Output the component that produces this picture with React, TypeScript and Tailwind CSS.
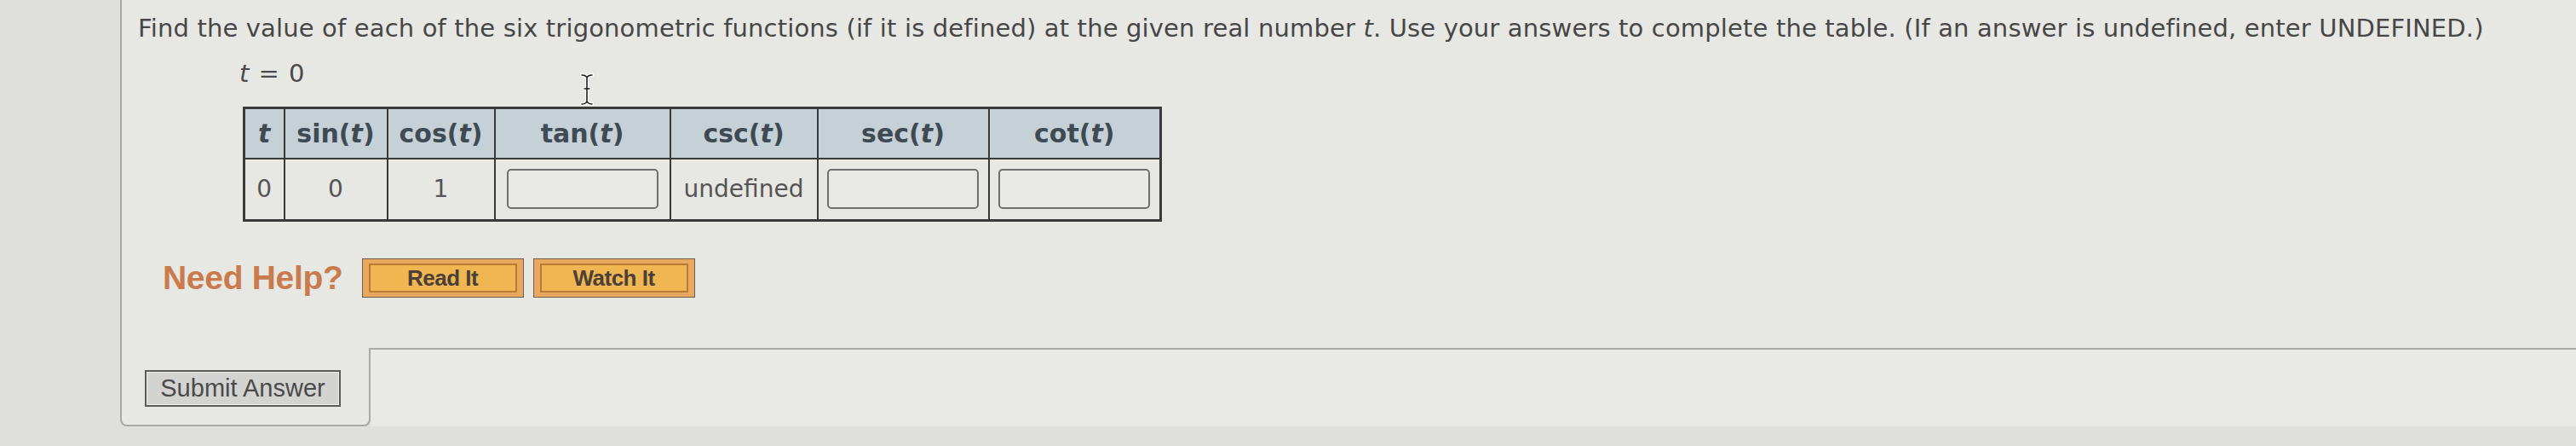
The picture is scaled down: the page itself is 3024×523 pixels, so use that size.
import React from 'react';

const cols = [
  { key: 't', w: 47 },
  { key: 'sin', w: 121 },
  { key: 'cos', w: 126 },
  { key: 'tan', w: 206 },
  { key: 'csc', w: 173 },
  { key: 'sec', w: 201 },
  { key: 'cot', w: 202 },
];

const Fn = ({ name }: { name: string }) => (
  <span>
    {name}(<i>t</i>)
  </span>
);

const AnswerBox = () => (
  <input
    type="text"
    className="block w-[178px] h-[47px] mx-auto rounded-[5px] border-2 border-[#6f6f6f] bg-[#e9e9e6] outline-none"
  />
);

const HelpButton = ({ label }: { label: string }) => (
  <button className="w-[190px] h-[46px] border border-[#6d5c4f] bg-[#e8a95f] px-[7px] py-[5px]">
    <div className="h-full flex items-center justify-center border-2 border-[#bb7a37] bg-[#efb651] font-['Liberation_Sans',Arial,sans-serif] font-bold text-[26px] tracking-[-0.5px] text-[#4b4038]">
      {label}
    </div>
  </button>
);

export default function App() {
  return (
    <div className="relative w-[3024px] h-[523px] overflow-hidden bg-[#dfdfdb] font-['DejaVu_Sans',Verdana,sans-serif]">
      <div className="ml-[141px] flex flex-col">
        {/* question panel */}
        <div className="relative border-l-2 border-[#a9a9a6] bg-[#e7e7e3] pl-[19px] pt-[14px] pb-[59px]">
          <p className="text-[29px] leading-[38px] tracking-[0.15px] text-[#474747] whitespace-nowrap">
            Find the value of each of the six trigonometric functions (if it is defined) at the given real number{' '}
            <i>t</i>. Use your answers to complete the table. (If an answer is undefined, enter UNDEFINED.)
          </p>

          <div className="ml-[119px] mt-[15px] text-[29px] leading-[38px] text-[#4a4a4a] [word-spacing:2px]">
            <i>t</i> = 0
          </div>

          <table className="ml-[123px] mt-[20px] table-fixed border-collapse border-[3px] border-[#3a3a3a] w-[1076px]">
            <colgroup>
              {cols.map((c) => (
                <col key={c.key} style={{ width: c.w }} />
              ))}
            </colgroup>
            <thead>
              <tr className="h-[59px] bg-[#c6d0d7] text-[30px] font-bold text-[#3e4a54]">
                <th className="border-2 border-[#3a3a3a]">
                  <i>t</i>
                </th>
                <th className="border-2 border-[#3a3a3a]"><Fn name="sin" /></th>
                <th className="border-2 border-[#3a3a3a]"><Fn name="cos" /></th>
                <th className="border-2 border-[#3a3a3a]"><Fn name="tan" /></th>
                <th className="border-2 border-[#3a3a3a]"><Fn name="csc" /></th>
                <th className="border-2 border-[#3a3a3a]"><Fn name="sec" /></th>
                <th className="border-2 border-[#3a3a3a]"><Fn name="cot" /></th>
              </tr>
            </thead>
            <tbody>
              <tr className="h-[73px] text-[28px] text-[#555555] text-center">
                <td className="border-2 border-[#3a3a3a]">0</td>
                <td className="border-2 border-[#3a3a3a]">0</td>
                <td className="border-2 border-[#3a3a3a]">1</td>
                <td className="border-2 border-[#3a3a3a]"><AnswerBox /></td>
                <td className="border-2 border-[#3a3a3a]">undefined</td>
                <td className="border-2 border-[#3a3a3a]"><AnswerBox /></td>
                <td className="border-2 border-[#3a3a3a]"><AnswerBox /></td>
              </tr>
            </tbody>
          </table>

          <div className="ml-[29px] mt-[43px] flex items-center h-[46px]">
            <span className="font-['Liberation_Sans',Arial,sans-serif] font-bold text-[39px] text-[#c97b4d] mr-[22px] tracking-[-0.3px]">
              Need Help?
            </span>
            <HelpButton label="Read It" />
            <div className="w-[11px]" />
            <HelpButton label="Watch It" />
          </div>

          {/* mouse cursor */}
          <svg
            className="absolute left-[537px] top-[86px]"
            width="18"
            height="38"
            viewBox="0 0 18 38"
            fill="none"
          >
            <path
              d="M3 2 C6 2 8 3 9 5 C10 3 12 2 15 2 M9 5 V33 M6 18 H12 M3 36 C6 36 8 35 9 33 C10 35 12 36 15 36"
              stroke="#ffffff"
              strokeWidth="4"
              strokeLinecap="round"
            />
            <path
              d="M3 2 C6 2 8 3 9 5 C10 3 12 2 15 2 M9 5 V33 M6 18 H12 M3 36 C6 36 8 35 9 33 C10 35 12 36 15 36"
              stroke="#1e1e1e"
              strokeWidth="1.6"
              strokeLinecap="round"
            />
          </svg>
        </div>

        {/* submit area */}
        <div className="flex">
          <div className="w-[294px] h-[92px] border-l-2 border-r-2 border-b-2 border-[#a9a9a6] rounded-b-[8px] bg-[#e7e7e3] pl-[27px] pt-[26px]">
            <button className="w-[230px] h-[43px] border-2 border-[#5a5a5a] bg-[#d3d3d1] shadow-[inset_0_0_0_1px_#efefed] font-['Liberation_Sans',Arial,sans-serif] text-[29px] leading-none text-[#4a4a4a]">
              Submit Answer
            </button>
          </div>
          <div className="flex-1 border-t-2 border-[#aaaaa8] bg-[#e9e9e6]" />
        </div>
      </div>
    </div>
  );
}
